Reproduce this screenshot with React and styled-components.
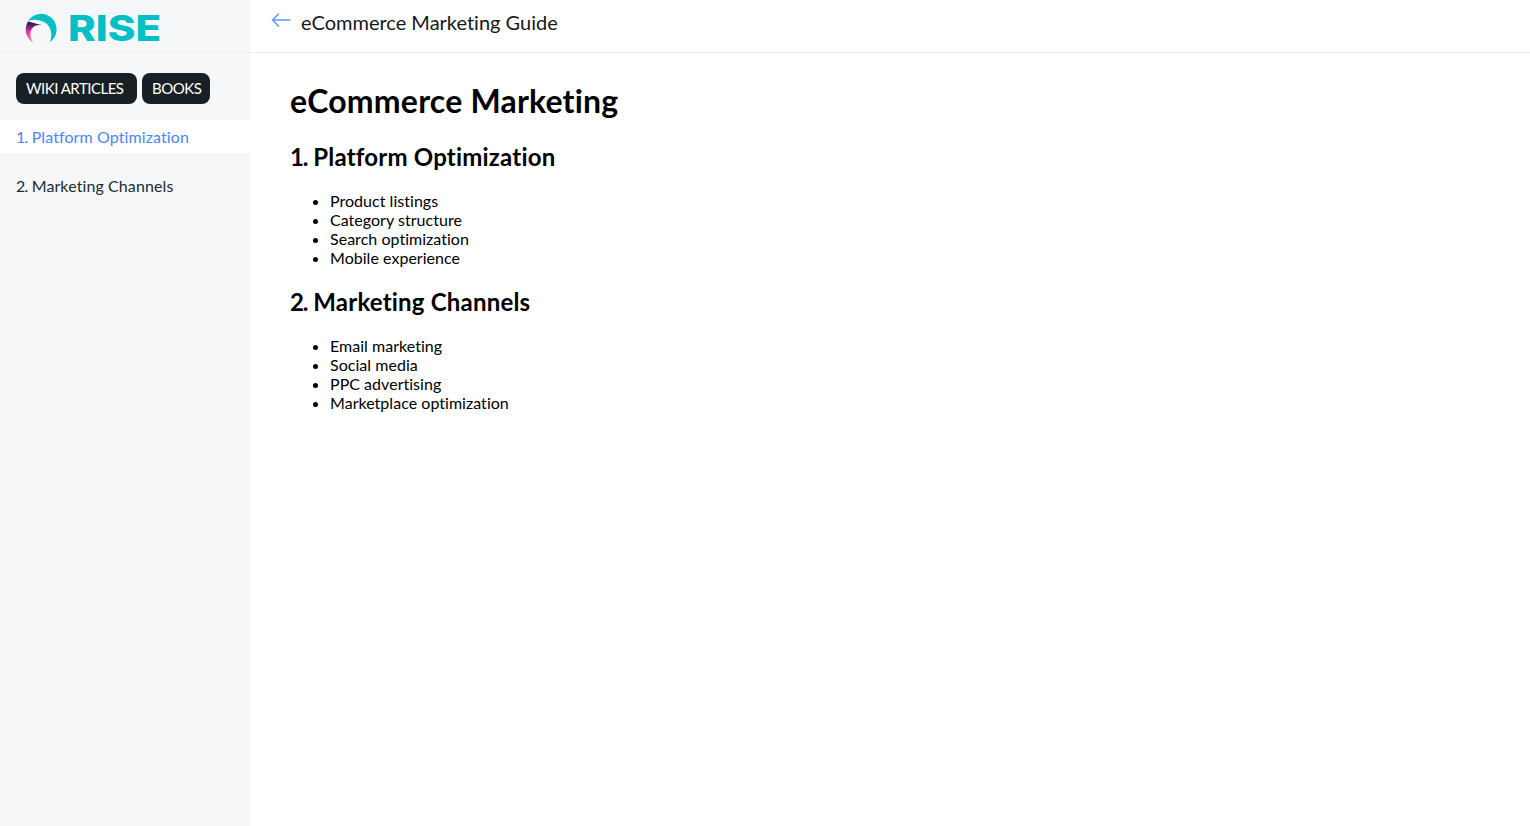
import React from "react";
import styled, { createGlobalStyle } from "styled-components";

const GlobalStyle = createGlobalStyle`
  html, body {
    margin: 0;
    padding: 0;
    height: 100%;
    background: #fff;
    font-family: "Lato", "Liberation Sans", sans-serif;
    font-variant-ligatures: none;
    color: #000;
  }
  * { box-sizing: border-box; }
`;

const articles = [
  {
    num: "1.",
    title: "Platform Optimization",
    items: ["Product listings", "Category structure", "Search optimization", "Mobile experience"],
  },
  {
    num: "2.",
    title: "Marketing Channels",
    items: ["Email marketing", "Social media", "PPC advertising", "Marketplace optimization"],
  },
];

const Page = styled.div`
  display: flex;
  height: 826px;
  overflow: hidden;
`;

const Sidebar = styled.aside`
  flex: none;
  width: 250px;
  background: #f5f7f9;
`;

const LogoBar = styled.div`
  display: flex;
  align-items: center;
  gap: 11px;
  height: 53px;
  padding: 4px 0 0 25px;
  border-bottom: 1px solid #e9eef5;
`;

const LogoText = styled.span`
  font-family: "Inter", sans-serif;
  font-weight: 800;
  font-size: 35px;
  line-height: 1;
  color: #00bfc6;
  transform: scaleX(1.2);
  transform-origin: left center;
`;

const Tabs = styled.div`
  display: flex;
  gap: 5px;
  padding: 20px 16px 16px;
`;

const TabButton = styled.button`
  width: ${(p) => p.$width}px;
  height: 31px;
  padding: 0 0 2px 10px;
  border: 0;
  border-radius: 8px;
  background: #182025;
  color: #fff;
  font-family: inherit;
  font-size: 15px;
  letter-spacing: -0.5px;
  font-variant-ligatures: none;
  text-align: left;
`;

const NavItem = styled.a`
  display: block;
  height: 33px;
  margin-bottom: 16px;
  padding-left: 16px;
  font-size: 16px;
  line-height: 34px;
  letter-spacing: 0.1px;
  color: ${(p) => (p.$active ? "#4d86f7" : "#242b32")};
  background: ${(p) => (p.$active ? "#fff" : "transparent")};
`;

// the "1." / "2." prefix sets tighter than the words after it
const Num = styled.span`
  letter-spacing: -0.05em;
`;

const Main = styled.main`
  flex: 1;
  min-width: 0;
`;

const Header = styled.header`
  display: flex;
  align-items: center;
  height: 53px;
  padding: 0 0 8px 21px;
  border-bottom: 1px solid #e9eef5;
`;

const BackIcon = styled.svg`
  flex: none;
  width: 20px;
  height: 16px;
  margin: -5px 10px 0 0;
  color: #5b9bf8;
`;

const HeaderTitle = styled.h1`
  margin: 0;
  font-size: 20px;
  font-weight: 400;
  color: #14181c;
`;

const Content = styled.article`
  padding: 28px 40px;
`;

const PageTitle = styled.h2`
  margin: 0 0 20px;
  font-size: 32px;
  line-height: 40px;
  font-weight: 700;
  letter-spacing: 0.2px;
`;

const SectionTitle = styled.h3`
  margin: 0 0 18px;
  font-size: 24px;
  line-height: 32px;
  font-weight: 700;
  letter-spacing: 0.2px;
`;

const BulletList = styled.ul`
  margin: 0 0 19px;
  padding-left: 40px;
  font-size: 16px;
  line-height: 19px;
  letter-spacing: 0.03px;
`;

export default function App() {
  return (
    <>
      <GlobalStyle />
      <Page>
        <Sidebar>
          <LogoBar>
            <svg width="32" height="32" viewBox="0 0 32 32">
              <defs>
                <linearGradient id="rim" x1="0" y1="0" x2="0" y2="1">
                  <stop offset="0" stopColor="#1f1035" />
                  <stop offset="0.2" stopColor="#5c2480" />
                  <stop offset="0.45" stopColor="#e0309a" />
                  <stop offset="0.75" stopColor="#f06aa8" />
                  <stop offset="1" stopColor="#f9b64a" />
                </linearGradient>
              </defs>
              <path d="M8.5 31A15.5 15.5 0 0 1 3 9.5L20 14C12 11 6 15 5.500 21C5 25 6.500 28 8.500 31Z" fill="url(#rim)" />
              <path d="M3 9A15.5 15.5 0 1 1 25 30C28 22 26 13 18 9.5Q10 6.5 3 9Z" fill="#00bfc6" />
            </svg>
            <LogoText>RISE</LogoText>
          </LogoBar>
          <Tabs>
            <TabButton $width={121}>WIKI ARTICLES</TabButton>
            <TabButton $width={68}>BOOKS</TabButton>
          </Tabs>
          {articles.map((a, i) => (
            <NavItem key={a.title} $active={i === 0}>
              <Num>{a.num}</Num> {a.title}
            </NavItem>
          ))}
        </Sidebar>
        <Main>
          <Header>
            <BackIcon viewBox="0 0 20 16" fill="none" stroke="currentColor" strokeWidth="1.5" strokeLinecap="round" strokeLinejoin="round">
              <path d="M1.5 8H19M7.5 2L1.5 8L7.5 14" />
            </BackIcon>
            <HeaderTitle>eCommerce Marketing Guide</HeaderTitle>
          </Header>
          <Content>
            <PageTitle>eCommerce Marketing</PageTitle>
            {articles.map((a) => (
              <section key={a.title}>
                <SectionTitle>
                  <Num>{a.num}</Num> {a.title}
                </SectionTitle>
                <BulletList>
                  {a.items.map((item) => (
                    <li key={item}>{item}</li>
                  ))}
                </BulletList>
              </section>
            ))}
          </Content>
        </Main>
      </Page>
    </>
  );
}
